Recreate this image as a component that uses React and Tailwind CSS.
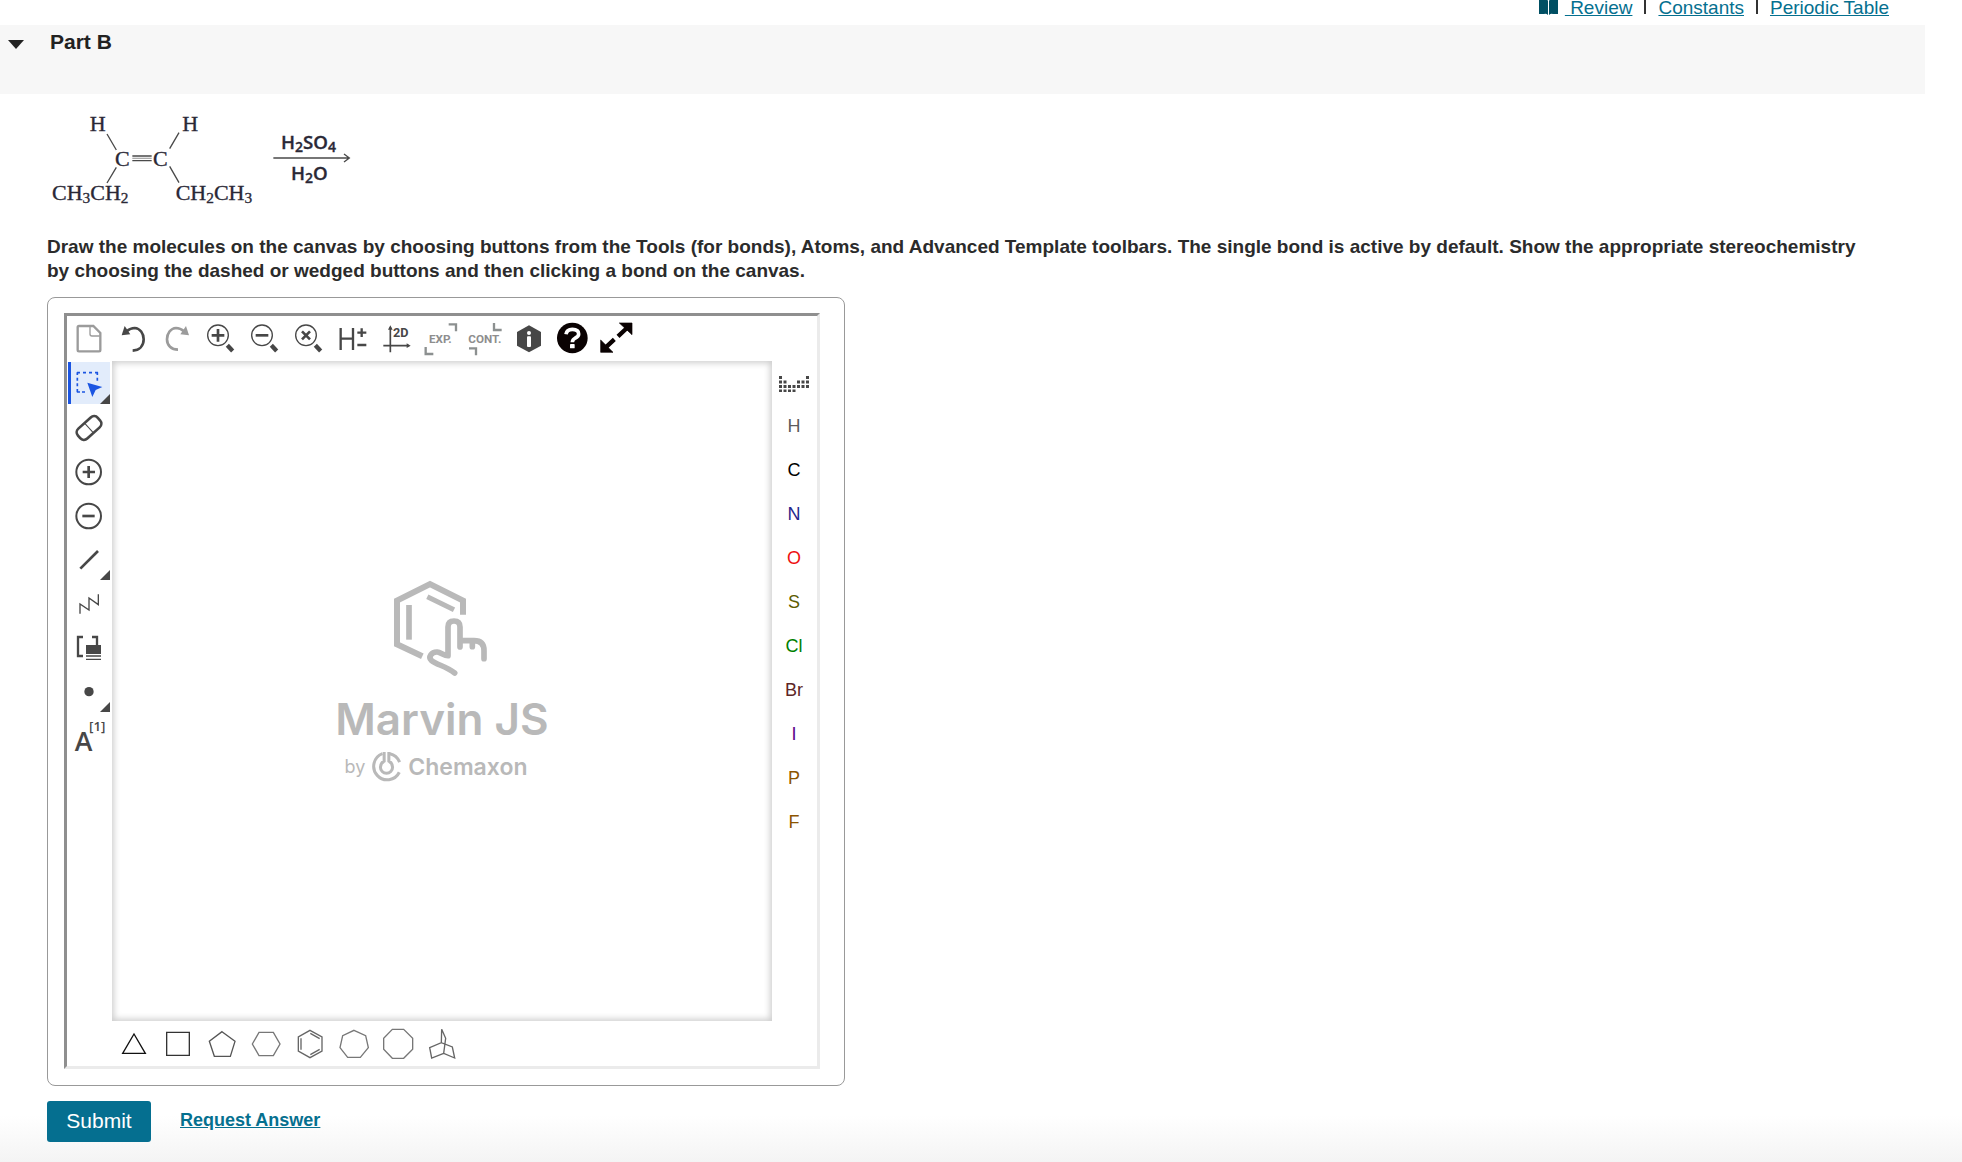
import { useState } from "react"

const DARK = "#474747"

const topTools = [
  { label: "New", icon: <NewIcon /> },
  { label: "Undo", icon: <UndoIcon /> },
  { label: "Redo", icon: <RedoIcon /> },
  { label: "Zoom in", icon: <ZoomIcon box="477 78 132 135" cx={534} mark="M515 136H553M534 117V155" /> },
  { label: "Zoom out", icon: <ZoomIcon box="609 78 132 135" cx={666} mark="M647 136H685" /> },
  { label: "Fit to screen", icon: <ZoomIcon box="741 78 132 135" cx={798} mark="M786 124L810 148M810 124L786 148" /> },
  { label: "Hydrogens", icon: <HydrogenIcon /> },
  { label: "Clean in 2D", icon: <CleanIcon /> },
  { label: "Expand group", icon: <ExpandIcon /> },
  { label: "Contract group", icon: <ContractIcon /> },
  { label: "About", icon: <InfoIcon /> },
  { label: "Help", icon: <HelpIcon /> },
  { label: "Full screen", icon: <FullScreenIcon /> },
]

const sideTools = [
  { label: "Select", icon: <SelectIcon /> },
  { label: "Erase", icon: <EraserIcon /> },
  { label: "Increase charge", icon: <ChargeIcon box="81 297 132 132" cy={366} mark="M128 366H165M146 348V384" /> },
  { label: "Decrease charge", icon: <ChargeIcon box="81 429 132 132" cy={498} mark="M127 498H164" /> },
  { label: "Single bond", icon: <BondIcon /> },
  { label: "Chain", icon: <ChainIcon /> },
  { label: "Bracket", icon: <BracketIcon /> },
  { label: "Radical", icon: <RadicalIcon /> },
  { label: "Atom map", icon: <MapIcon /> },
]

const atoms = [
  { symbol: "H", color: "text-[#5c5c5c]" },
  { symbol: "C", color: "text-black" },
  { symbol: "N", color: "text-[#26268c]" },
  { symbol: "O", color: "text-[#ee1111]" },
  { symbol: "S", color: "text-[#5c5c00]" },
  { symbol: "Cl", color: "text-[#008000]" },
  { symbol: "Br", color: "text-[#5c2626]" },
  { symbol: "I", color: "text-[#5c008c]" },
  { symbol: "P", color: "text-[#8c5500]" },
  { symbol: "F", color: "text-[#8c5500]" },
]

const templates = [
  { label: "Cyclopropane", box: "336 123 132 135", d: "M402 162L436 220H368Z", stroke: "#111" },
  { label: "Cyclobutane", box: "468 123 132 135", d: "M500 157H568V226H500Z", stroke: "#333" },
  { label: "Cyclopentane", box: "600 123 132 135", d: "M666 155L705 184L691 229H643L628 184Z", stroke: "#555" },
  { label: "Cyclohexane", box: "732 123 132 135", d: "M757 192L777 157H820L840 192L820 227H777Z", stroke: "#777" },
  {
    label: "Benzene",
    box: "864 123 132 135",
    d: "M930 151L966 171V213L930 233L895 213V171ZM903 175V209M931 160L959 176M931 224L959 208",
    stroke: "#666",
  },
  { label: "Cycloheptane", box: "996 123 132 135", d: "M1062 151L1097 167L1105 203L1081 232H1043L1020 203L1028 167Z", stroke: "#777" },
  { label: "Cyclooctane", box: "1128 123 132 135", d: "M1177 148H1211L1238 175V208L1211 235H1177L1151 208V175Z", stroke: "#777" },
  {
    label: "Bicyclooctane",
    box: "1260 123 132 135",
    d: "M1324 188L1325 148L1337 175L1331 220L1364 234L1357 201L1324 188L1289 203L1295 234L1331 220",
    stroke: "#666",
  },
]

function Icon({ box, children, className = "h-[45px] w-[44px]" }) {
  return (
    <svg viewBox={box} className={className} fill="none" stroke={DARK} aria-hidden="true">
      {children}
    </svg>
  )
}

function SideIcon({ box, children }) {
  return (
    <Icon box={box} className="size-[44px] overflow-visible">
      {children}
    </Icon>
  )
}

function NewIcon() {
  return (
    <Icon box="81 78 132 135">
      <g stroke="#9b9b9b">
        <path d="M117 108H160L181 129V180Q181 184 177 184H117Q113 184 113 180V112Q113 108 117 108Z" strokeWidth="7" />
        <path d="M150 110V132Q150 138 156 138H179" strokeWidth="4" />
      </g>
    </Icon>
  )
}

function UndoIcon() {
  return (
    <Icon box="213 78 132 135">
      <path d="M260 124C270 115 280 114 284 114C300 115 311 130 311 148C311 168 298 181 278 182" strokeWidth="8" />
      <path d="M254 108L245 136L271 133Z" fill={DARK} stroke="none" />
    </Icon>
  )
}

function RedoIcon() {
  return (
    <Icon box="345 78 132 135">
      <path d="M432 124C422 115 414 114 408 114C392 115 381 130 381 148C381 166 394 179 414 179" strokeWidth="8" stroke="#9b9b9b" />
      <path d="M438 108L447 136L421 133Z" fill="#9b9b9b" stroke="none" />
    </Icon>
  )
}

function ZoomIcon({ box, cx, mark }) {
  return (
    <Icon box={box}>
      <circle cx={cx} cy="136" r="31" strokeWidth="4" />
      <path d={mark} strokeWidth="8" />
      <path d={`M${cx + 28} 166L${cx + 44} 183`} strokeWidth="13" />
    </Icon>
  )
}

function HydrogenIcon() {
  return (
    <Icon box="873 78 132 135">
      <path d="M902 114V180M939 114V180M902 146H939M952 128H979M965 115V141M952 165H979" strokeWidth="7" />
    </Icon>
  )
}

function CleanIcon() {
  return (
    <Icon box="45 78 132 135">
      <path d="M91 112V187M70 167H146" strokeWidth="5" />
      <path d="M91 106L98 119H84ZM152 167L140 174V160Z" fill={DARK} stroke="none" />
      <text x="99" y="141" fontSize="38" fontWeight="700" fontFamily="Roboto, sans-serif" fill={DARK} stroke="none">2D</text>
    </Icon>
  )
}

function ExpandIcon() {
  return (
    <Icon box="177 78 132 135">
      <path d="M266 103H288V124M197 171V192H220" strokeWidth="7" stroke="#8c9090" />
      <text x="207" y="160" fontSize="35" fontWeight="700" fontFamily="Roboto, sans-serif" fill="#8e8e8e" stroke="none">EXP.</text>
    </Icon>
  )
}

function ContractIcon() {
  return (
    <Icon box="309 78 132 135">
      <path d="M402 99V120H425M327 175H348V196" strokeWidth="7" stroke="#8c9090" />
      <text x="325" y="160" fontSize="35" fontWeight="700" fontFamily="Roboto, sans-serif" fill="#8e8e8e" stroke="none">CONT.</text>
    </Icon>
  )
}

function InfoIcon() {
  return (
    <Icon box="441 78 132 135">
      <path d="M507 106L543 126V167L507 187L471 167V126Z" fill={DARK} stroke="none" />
      <circle cx="507" cy="129" r="6" fill="#fff" stroke="none" />
      <rect x="501" y="139" width="12" height="32" rx="3" fill="#fff" stroke="none" />
    </Icon>
  )
}

function HelpIcon() {
  return (
    <Icon box="573 78 132 135">
      <circle cx="637" cy="144" r="46" fill="#0a0202" stroke="none" />
      <path d="M618 133Q620 118 637 118Q656 118 656 132Q656 139 646 144Q637 149 637 157" strokeWidth="11" stroke="#fff" />
      <rect x="630" y="162" width="14" height="13" rx="2" fill="#fff" stroke="none" />
    </Icon>
  )
}

function FullScreenIcon() {
  return (
    <Icon box="705 78 132 135">
      <path d="M778 99H816V134ZM722 150V187H759Z" fill="#0a0202" stroke="#0a0202" strokeWidth="2" />
      <path d="M804 111L774 139M734 175L763 148" stroke="#0a0202" strokeWidth="13" />
    </Icon>
  )
}

function SelectIcon() {
  return (
    <SideIcon box="81 33 132 132">
      <path d="M84 36H210V162H84Z" fill="#e2ecfb" stroke="none" />
      <path d="M84 36H93V162H84Z" fill="#1b55e2" stroke="none" />
      <path
        d="M111 68H120M129 68H138M147 68H156M165 68H174M112 67V75M112 83V92M112 100V109M112 117V127M172 67V75M172 83V92M111 126H120M126 126H135"
        stroke="#1b55e2"
        strokeWidth="5"
      />
      <path d="M142 98L187 111L167 120L157 141Z" fill="#1b55e2" stroke="none" />
      <path d="M180 162L210 132V162Z" fill={DARK} stroke="none" />
    </SideIcon>
  )
}

function EraserIcon() {
  return (
    <SideIcon box="81 165 132 132">
      <g transform="rotate(-42 147 234)">
        <rect x="107" y="214" width="80" height="40" rx="15" strokeWidth="8" />
        <path d="M147 214V254" strokeWidth="3" />
      </g>
    </SideIcon>
  )
}

function ChargeIcon({ box, cy, mark }) {
  return (
    <SideIcon box={box}>
      <circle cx="146" cy={cy} r="37" strokeWidth="6" />
      <path d={mark} strokeWidth="8" />
    </SideIcon>
  )
}

function BondIcon() {
  return (
    <SideIcon box="81 561 132 132">
      <path d="M121 656L174 603" strokeWidth="8" />
      <path d="M180 690L210 660V690Z" fill={DARK} stroke="none" />
    </SideIcon>
  )
}

function ChainIcon() {
  return (
    <SideIcon box="81 693 132 132">
      <path d="M120 791V762L147 780V744L175 764V733" strokeWidth="4" />
    </SideIcon>
  )
}

function BracketIcon() {
  return (
    <SideIcon box="81 825 132 132">
      <path d="M129 861H114V918H129M156 861H171V888" strokeWidth="7" />
      <path d="M138 885H183V912H138Z" fill={DARK} stroke="none" />
      <path d="M138 918H183M138 928H183" strokeWidth="4" />
    </SideIcon>
  )
}

function RadicalIcon() {
  return (
    <SideIcon box="81 957 132 132">
      <circle cx="147" cy="1025" r="14" fill={DARK} stroke="none" />
      <path d="M180 1086L210 1056V1086Z" fill={DARK} stroke="none" />
    </SideIcon>
  )
}

function MapIcon() {
  return (
    <SideIcon box="81 1089 132 132">
      <g fill={DARK} stroke="none" fontFamily="Open Sans, sans-serif" fontWeight="600">
        <text x="104" y="1202" fontSize="80">A</text>
        <text x="147" y="1142" fontSize="40">[1]</text>
      </g>
    </SideIcon>
  )
}

function PeriodicIcon() {
  const rows = [[0, 6], [0, 1, 4, 5, 6], [0, 1, 2, 3, 4, 5, 6], [0, 1, 2, 3]]
  return (
    <svg viewBox="0 0 90 50" className="w-[30px]" fill={DARK} aria-hidden="true">
      {rows.map((cols, r) =>
        cols.map((c) => <rect key={`${r}-${c}`} x={c * 13.5} y={r * 13.5} width="9" height="9" />)
      )}
    </svg>
  )
}

function BookIcon() {
  return (
    <svg viewBox="0 0 19 16" className="h-4 w-[19px]" fill="#004f63" aria-hidden="true">
      <path d="M0 0H8Q9 0 9 1V15Q7 13 5 14H0ZM19 0H11Q10 0 10 1V15Q12 13 14 14H19Z" />
    </svg>
  )
}

function Reaction() {
  return (
    <svg viewBox="150 336 906 288" className="w-[302px]" role="img" aria-label="Reaction of 3-hexene with sulfuric acid and water">
      <g fill="#2a2836" stroke="#2a2836" fontFamily="Liberation Serif, serif" fontSize="66">
        <text x="269" y="394">H</text>
        <text x="547" y="394">H</text>
        <text x="345" y="497">C</text>
        <text x="459" y="497">C</text>
        <text x="156" y="600">
          CH<tspan dy="10" fontSize="46">3</tspan><tspan dy="-10">CH</tspan><tspan dy="10" fontSize="46">2</tspan>
        </text>
        <text x="527" y="600">
          CH<tspan dy="10" fontSize="46">2</tspan><tspan dy="-10">CH</tspan><tspan dy="10" fontSize="46">3</tspan>
        </text>
      </g>
      <g fill="#2a2836" stroke="#2a2836" fontFamily="Open Sans, sans-serif" fontWeight="600" fontSize="56">
        <text x="843" y="448">
          H<tspan dy="9" fontSize="42">2</tspan><tspan dy="-9">SO</tspan><tspan dy="9" fontSize="42">4</tspan>
        </text>
        <text x="873" y="539">
          H<tspan dy="9" fontSize="42">2</tspan><tspan dy="-9">O</tspan>
        </text>
      </g>
      <g fill="none" stroke="#4a4a4a" strokeWidth="4">
        <path d="M321 402L349 450M537 398L509 446M321 549L349 502M509 499L537 548" />
        <path d="M397 468H455M397 482H455" />
        <path d="M397 475H455" stroke="#aaa" />
        <path d="M820 474H1046M1032 462L1048 474L1032 486" />
      </g>
    </svg>
  )
}

function Watermark() {
  return (
    <div className="flex flex-col items-center text-[#b9b9b9]" style={{ fontFamily: "Inter, sans-serif" }}>
      <svg viewBox="219 60 288 294" className="mr-0.5 w-24" fill="none" stroke="currentColor" aria-hidden="true">
        <path d="M307 292L231 256V125L330 75L429 125V167" strokeWidth="18" />
        <path d="M267 138V242" strokeWidth="17" />
        <path d="M322 113L402 152" strokeWidth="15" />
        <path
          d="M404 342C376 320 350 318 334 304C324 294 334 278 352 279C362 280 372 290 384 290V204Q384 186 402 186Q420 186 420 204V264M420 245H462Q492 245 492 275V299M457 247V263"
          strokeWidth="17"
          strokeLinecap="round"
          strokeLinejoin="round"
        />
      </svg>
      <p className="mt-4 text-[44px] leading-[52px] font-semibold">Marvin JS</p>
      <p className="mt-1.5 mr-3 flex items-center text-[23px] leading-8 font-semibold">
        <span className="mr-1.5 text-[18px] font-normal">by</span>
        <svg viewBox="150 570 92 94" className="mr-1.5 w-[31px]" fill="none" stroke="currentColor" strokeWidth="9" aria-hidden="true">
          <path d="M184 578A40 40 0 1 0 234 633M206 578Q226 582 235 603" />
          <path d="M189 573V600Q178 606 178 618A18 18 0 0 0 214 618Q214 606 203 600V573" />
        </svg>
        Chemaxon
      </p>
    </div>
  )
}

function Sketcher() {
  const [tool, setTool] = useState("Select")

  return (
    <div className="grid grid-cols-[45px_minmax(0,1fr)_45px] border-3 border-t-[#8f8f8f] border-l-[#8f8f8f] border-r-[#ebebeb] border-b-[#ebebeb]">
      <div className="col-span-3 flex">
        {topTools.map((t) => (
          <button key={t.label} type="button" aria-label={t.label}>
            {t.icon}
          </button>
        ))}
      </div>

      <div className="flex flex-col items-start">
        {sideTools.map((t) => (
          <button key={t.label} type="button" aria-label={t.label} aria-pressed={tool === t.label} onClick={() => setTool(t.label)}>
            {t.icon}
          </button>
        ))}
      </div>

      <div className="flex aspect-square items-center justify-center bg-white pb-5 shadow-[inset_0_0_6px_2px_rgba(0,0,0,0.2)]">
        <Watermark />
      </div>

      <div className="flex flex-col pr-px">
        <button type="button" aria-label="Periodic table" className="flex h-11 items-center justify-center pt-0.5">
          <PeriodicIcon />
        </button>
        {atoms.map((a) => (
          <button key={a.symbol} type="button" className={`h-11 pb-0.5 text-[18px] leading-5 ${a.color}`}>
            {a.symbol}
          </button>
        ))}
      </div>

      <div className="col-span-3 flex pl-[45px]">
        {templates.map((t) => (
          <button key={t.label} type="button" aria-label={t.label}>
            <Icon box={t.box}>
              <path d={t.d} stroke={t.stroke} strokeWidth="4" />
            </Icon>
          </button>
        ))}
      </div>
    </div>
  )
}

export default function App() {
  const [open, setOpen] = useState(true)

  return (
    <main
      className="min-h-screen bg-linear-to-b from-white from-96% to-[#f4f4f4] text-[#2b2b2b]"
      style={{ fontFamily: "'Liberation Sans', Arial, sans-serif" }}
    >
      <nav className="flex h-[25px] items-start justify-end pr-[73px] text-[19px] leading-4 text-[#05708f]">
        <BookIcon />
        <a href="#review" className="ml-[7px] whitespace-pre underline"> Review</a>
        <span className="mx-3 h-[14px] w-[2px] bg-[#333]" />
        <a href="#constants" className="underline">Constants</a>
        <span className="mx-3 h-[14px] w-[2px] bg-[#333]" />
        <a href="#periodic" className="underline">Periodic Table</a>
      </nav>

      <header className="mr-[37px] h-[69px] bg-[#f7f7f7] pt-[7px]">
        <button type="button" aria-expanded={open} onClick={() => setOpen(!open)} className="flex items-center pl-2 text-[21px] leading-5 font-bold text-[#222]">
          <svg viewBox="0 0 16 9" className="mt-1 mr-[26px] w-4" fill="#222" aria-hidden="true">
            <path d="M0 0H16L8 9Z" />
          </svg>
          Part B
        </button>
      </header>

      {open && (
        <section className="pr-[37px] pl-[47px]">
          <div className="pt-[18px] pl-[3px]">
            <Reaction />
          </div>
          <p className="mt-[27px] pr-[50px] text-[19px] leading-6 font-bold">
            Draw the molecules on the canvas by choosing buttons from the Tools (for bonds), Atoms, and Advanced Template
            toolbars. The single bond is active by default. Show the appropriate stereochemistry by choosing the dashed or
            wedged buttons and then clicking a bond on the canvas.
          </p>

          <div className="mt-[14px] max-w-[798px] rounded-lg border border-[#999] bg-white pt-[15px] pr-6 pb-4 pl-4">
            <Sketcher />
          </div>

          <div className="mt-[15px] flex items-center">
            <button type="submit" className="h-[41px] w-[104px] rounded-[3px] bg-[#056f90] pb-0.5 text-[21px] text-white">
              Submit
            </button>
            <a href="#answer" className="ml-[29px] pb-0.5 text-[18px] font-bold text-[#05708f] underline">Request Answer</a>
          </div>
        </section>
      )}
    </main>
  )
}
